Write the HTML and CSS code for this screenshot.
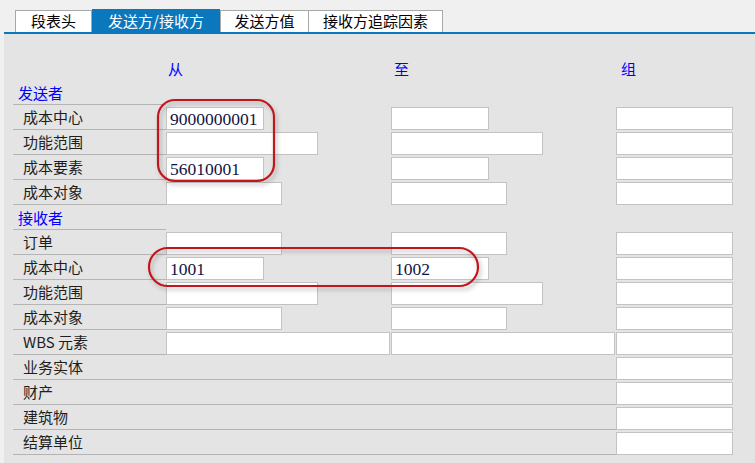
FILE: index.html
```html
<!DOCTYPE html>
<html lang="zh">
<head>
<meta charset="utf-8">
<title>发送方/接收方</title>
<link rel="stylesheet" href="styles.css">
</head>
<body>
<div class="tabs">
  <div class="tab t1">段表头</div>
  <div class="tab active">发送方/接收方</div>
  <div class="tab t3">发送方值</div>
  <div class="tab t4">接收方追踪因素</div>
</div>
<div class="panel">
  <div class="grid">
    <div class="blank"></div>
    <div class="colhead c2">从</div><div class="colhead c3">至</div><div class="colhead c4">组</div>

    <div class="section">发送者</div>

    <div class="lbl">成本中心</div>
    <div class="cell c2"><div class="inp w98">9000000001</div></div>
    <div class="cell c3"><div class="inp w98"></div></div>
    <div class="cell c4"><div class="inp w117"></div></div>

    <div class="lbl">功能范围</div>
    <div class="cell c2"><div class="inp w152"></div></div>
    <div class="cell c3"><div class="inp w152"></div></div>
    <div class="cell c4"><div class="inp w117"></div></div>

    <div class="lbl">成本要素</div>
    <div class="cell c2"><div class="inp w98">56010001</div></div>
    <div class="cell c3"><div class="inp w98"></div></div>
    <div class="cell c4"><div class="inp w117"></div></div>

    <div class="lbl">成本对象</div>
    <div class="cell c2"><div class="inp w116"></div></div>
    <div class="cell c3"><div class="inp w116"></div></div>
    <div class="cell c4"><div class="inp w117"></div></div>

    <div class="section">接收者</div>

    <div class="lbl">订单</div>
    <div class="cell c2"><div class="inp w116"></div></div>
    <div class="cell c3"><div class="inp w116"></div></div>
    <div class="cell c4"><div class="inp w117"></div></div>

    <div class="lbl">成本中心</div>
    <div class="cell c2"><div class="inp w98">1001</div></div>
    <div class="cell c3"><div class="inp w98">1002</div></div>
    <div class="cell c4"><div class="inp w117"></div></div>

    <div class="lbl">功能范围</div>
    <div class="cell c2"><div class="inp w152"></div></div>
    <div class="cell c3"><div class="inp w152"></div></div>
    <div class="cell c4"><div class="inp w117"></div></div>

    <div class="lbl">成本对象</div>
    <div class="cell c2"><div class="inp w116"></div></div>
    <div class="cell c3"><div class="inp w116"></div></div>
    <div class="cell c4"><div class="inp w117"></div></div>

    <div class="lbl">WBS 元素</div>
    <div class="cell c2"><div class="inp w224"></div></div>
    <div class="cell c3"><div class="inp w224"></div></div>
    <div class="cell c4"><div class="inp w117"></div></div>

    <div class="lbl wide">业务实体</div>
    <div class="cell c4"><div class="inp w117"></div></div>

    <div class="lbl wide">财产</div>
    <div class="cell c4"><div class="inp w117"></div></div>

    <div class="lbl wide">建筑物</div>
    <div class="cell c4"><div class="inp w117"></div></div>

    <div class="lbl wide">结算单位</div>
    <div class="cell c4"><div class="inp w117"></div></div>
  </div>
</div>
<svg class="marks" width="755" height="463" viewBox="0 0 755 463" xmlns="http://www.w3.org/2000/svg">
  <defs>
    <filter id="sh" x="-10%" y="-10%" width="130%" height="140%">
      <feDropShadow dx="2" dy="3" stdDeviation="2" flood-color="#606060" flood-opacity="0.45"/>
    </filter>
  </defs>
  <rect x="158" y="100" width="116" height="81" rx="17" ry="17" fill="none" stroke="#c3161c" stroke-width="2.2" filter="url(#sh)"/>
  <rect x="149" y="248" width="329" height="38" rx="19" ry="19" fill="none" stroke="#c3161c" stroke-width="2.2" filter="url(#sh)"/>
</svg>
</body>
</html>
```
FILE: styles.css
```css
* { box-sizing: border-box; }
html, body { margin: 0; padding: 0; }
body {
  width: 755px;
  height: 463px;
  overflow: hidden;
  background: #f0f0f0;
  font-family: "Noto Sans CJK SC", "Liberation Sans", sans-serif;
  font-size: 15px;
  color: #1e1e1e;
  position: relative;
}
.tabs {
  display: flex;
  align-items: flex-end;
  height: 32px;
  padding-left: 15px;
}
.tab {
  height: 22px;
  line-height: 20px;
  text-align: center;
  background: #ffffff;
  border: 1px solid #a8a8a8;
  border-bottom: none;
  color: #000;
}
.t1 { width: 77px; }
.tab.active {
  width: 128px;
  height: 23px;
  line-height: 22px;
  background: #0b78bd;
  border-color: #0b78bd;
  color: #ffffff;
}
.t3 { width: 88px; border-right: none; }
.t4 { width: 135px; }
.panel {
  margin-left: 4px;
  height: 431px;
  background: #e4e4e4;
  border-top: 2px solid #0b78bd;
}
.grid {
  display: grid;
  grid-template-columns: 153px 225px 225px 117px;
  grid-auto-rows: 25px;
  padding: 21px 0 0 9px;
}
.blank { grid-column: 1; }
.colhead {
  color: #0000ff;
  line-height: 28px;
  padding-left: 2px;
}
.c2 { grid-column: 2; }
.c3 { grid-column: 3; }
.c4 { grid-column: 4; }
.colhead.c3 { padding-left: 3px; }
.colhead.c4 { padding-left: 5px; }
.section {
  grid-column: 1;
  color: #0000ff;
  line-height: 25px;
  padding-left: 5px;
  border-bottom: 1px solid #b4b4b4;
}
.lbl {
  grid-column: 1;
  line-height: 24px;
  padding-left: 10px;
  border-bottom: 1px solid #b4b4b4;
  white-space: nowrap;
}
.lbl.wide { grid-column: 1 / span 3; }
.cell { padding-top: 2px; }
.inp {
  height: 23px;
  background: #ffffff;
  border: 1px solid #c3c3c3;
  font-family: "Liberation Serif", serif;
  font-size: 17.5px;
  line-height: 22px;
  padding-left: 3px;
  color: #12123f;
  white-space: nowrap;
  overflow: hidden;
}
.w98 { width: 98px; }
.w116 { width: 116px; }
.w117 { width: 117px; }
.w152 { width: 152px; }
.w224 { width: 224px; }
.marks {
  position: absolute;
  left: 0;
  top: 0;
  pointer-events: none;
}
```
